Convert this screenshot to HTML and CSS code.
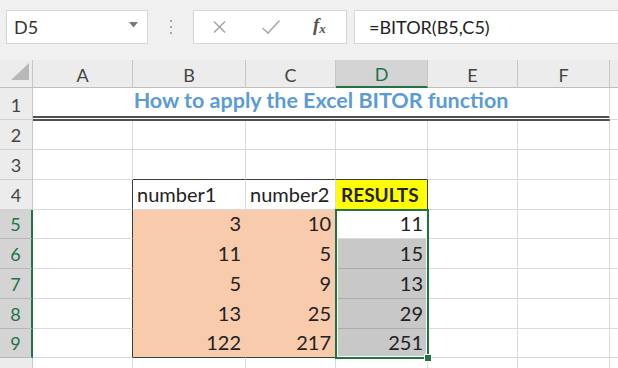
FILE: index.html
```html
<!DOCTYPE html>
<html>
<head>
<meta charset="utf-8">
<link rel="stylesheet" href="styles.css">
</head>
<body>
<div class="toolbar">
  <div class="namebox">
    <span class="nb-text">D5</span>
    <svg class="nb-arrow" width="9" height="6" viewBox="0 0 9 6"><path d="M0 0H9L4.5 5.5Z" fill="#7a7a7a"/></svg>
  </div>
  <div class="dots"><i></i><i></i><i></i></div>
  <div class="fxbox">
    <svg class="ic" width="20" height="14" viewBox="0 0 20 14"><path d="M4 1.5L15 12.5M15 1.5L4 12.5" stroke="#a0a0a0" stroke-width="1.4" fill="none"/></svg>
    <svg class="ic" width="20" height="16" viewBox="0 0 20 16"><path d="M1.5 9L7 14L18.5 1.5" stroke="#aaaaaa" stroke-width="1.6" fill="none"/></svg>
    <span class="fx"><i>f</i><sub>x</sub></span>
  </div>
  <div class="formula">=BITOR(B5,C5)</div>
</div>

<div class="sheet">
  <!-- header row -->
  <div class="corner"><svg width="19" height="18" viewBox="0 0 19 18"><path d="M18 0V17H0Z" fill="#b8b8b8"/></svg></div>
  <div class="ch">A</div>
  <div class="ch">B</div>
  <div class="ch">C</div>
  <div class="ch ch-sel">D</div>
  <div class="ch">E</div>
  <div class="ch">F</div>
  <div class="ch ch-last"></div>

  <!-- row 1 -->
  <div class="rh">1</div>
  <div class="c title">How to apply the Excel BITOR function</div>
  <div class="c"></div>

  <!-- row 2 -->
  <div class="rh">2</div>
  <div class="c"></div><div class="c"></div><div class="c"></div><div class="c"></div><div class="c"></div><div class="c"></div><div class="c"></div>

  <!-- row 3 -->
  <div class="rh">3</div>
  <div class="c"></div><div class="c tb-top"></div><div class="c tb-top"></div><div class="c tb-top"></div><div class="c"></div><div class="c"></div><div class="c"></div>

  <!-- row 4 -->
  <div class="rh">4</div>
  <div class="c tb-left"></div>
  <div class="c">number1</div>
  <div class="c">number2</div>
  <div class="c yellow">RESULTS</div>
  <div class="c"></div><div class="c"></div><div class="c"></div>

  <!-- row 5 -->
  <div class="rh rh-sel">5</div>
  <div class="c tb-left"></div>
  <div class="c num peach pb">3</div>
  <div class="c num peach">10</div>
  <div class="c num active">11
    <div class="selection"><span class="handle"></span></div>
  </div>
  <div class="c"></div><div class="c"></div><div class="c"></div>

  <!-- row 6 -->
  <div class="rh rh-sel">6</div>
  <div class="c tb-left"></div>
  <div class="c num peach pb">11</div>
  <div class="c num peach">5</div>
  <div class="c num shade">15</div>
  <div class="c"></div><div class="c"></div><div class="c"></div>

  <!-- row 7 -->
  <div class="rh rh-sel">7</div>
  <div class="c tb-left"></div>
  <div class="c num peach pb">5</div>
  <div class="c num peach">9</div>
  <div class="c num shade">13</div>
  <div class="c"></div><div class="c"></div><div class="c"></div>

  <!-- row 8 -->
  <div class="rh rh-sel">8</div>
  <div class="c tb-left"></div>
  <div class="c num peach pb">13</div>
  <div class="c num peach">25</div>
  <div class="c num shade">29</div>
  <div class="c"></div><div class="c"></div><div class="c"></div>

  <!-- row 9 -->
  <div class="rh rh-sel">9</div>
  <div class="c tb-left"></div>
  <div class="c num peach pb tb-bottom">122</div>
  <div class="c num peach tb-bottom">217</div>
  <div class="c num shade tb-bottom">251</div>
  <div class="c"></div><div class="c"></div><div class="c"></div>

  <!-- row 10 (only its top edge is in view) -->
  <div class="rh"></div>
  <div class="c"></div><div class="c"></div><div class="c"></div><div class="c"></div><div class="c"></div><div class="c"></div><div class="c"></div>
</div>
</body>
</html>
```

FILE: styles.css
```css
html, body {
  margin: 0;
  padding: 0;
  background: #ffffff;
  overflow: hidden;
}
body {
  width: 618px;
  height: 368px;
  font-family: Lato, "Liberation Sans", sans-serif;
  color: #222222;
}

/* ---------- toolbar ---------- */
.toolbar {
  height: 60px;
  box-sizing: border-box;
  background: #f0f0f0;
  display: flex;
  align-items: flex-start;
  padding-top: 10px;
}
.namebox {
  margin-left: 6px;
  width: 142px;
  height: 34px;
  box-sizing: border-box;
  background: #ffffff;
  border: 1px solid #d6d6d6;
  display: flex;
  align-items: center;
  justify-content: space-between;
  padding: 0 9px 0 7px;
}
.nb-text {
  font-size: 18px;
  color: #333333;
}
.nb-arrow {
  margin-top: -4px;
}
.dots {
  width: 45px;
  height: 34px;
  display: flex;
  flex-direction: column;
  align-items: center;
  justify-content: center;
  gap: 4px;
}
.dots i {
  display: block;
  width: 2px;
  height: 2px;
  background: #a8a8a8;
}
.fxbox {
  width: 154px;
  height: 34px;
  box-sizing: border-box;
  background: #ffffff;
  border: 1px solid #d6d6d6;
  display: flex;
  align-items: center;
  padding-left: 16px;
  gap: 31px;
}
.ic {
  display: block;
}
.fx {
  font-family: "Liberation Serif", serif;
  font-size: 19px;
  color: #555555;
  font-weight: bold;
  margin-top: -4px;
  margin-left: 1px;
}
.fx sub {
  font-style: italic;
  font-size: 13px;
  vertical-align: -2px;
}
.formula {
  flex: 1;
  margin-left: 7px;
  margin-right: -2px;
  height: 34px;
  box-sizing: border-box;
  background: #ffffff;
  border: 1px solid #d6d6d6;
  display: flex;
  align-items: center;
  padding-left: 14px;
  font-size: 18px;
  color: #222222;
}

/* ---------- sheet grid ---------- */
.sheet {
  display: grid;
  grid-template-columns: 33px 100px 113px 90px 92px 90px 92px 1fr;
  grid-template-rows: 28px 32px 30px 30px 30px 29px 30px 30px 30px 29px 30px;
  font-size: 20px;
}

.corner {
  background: #ececec;
  border-right: 1px solid #c6c6c6;
  border-bottom: 1px solid #bdbdbd;
  display: flex;
  align-items: flex-end;
  justify-content: flex-end;
  padding: 0 2px 6px 0;
}
.corner svg { display: block; }

.ch {
  background: #ececec;
  border-right: 1px solid #c6c6c6;
  border-bottom: 1px solid #bdbdbd;
  display: flex;
  align-items: center;
  justify-content: center;
  font-size: 18px;
  color: #444444;
  padding-top: 2px;
}
.ch-sel {
  background: #d4d4d4;
  color: #217346;
  border-bottom: 2px solid #217346;
}
.ch-last {
  border-right: none;
}

.rh {
  background: #ececec;
  border-right: 1px solid #c6c6c6;
  border-bottom: 1px solid #d0d0d0;
  display: flex;
  align-items: flex-end;
  justify-content: center;
  padding-bottom: 3px;
  font-size: 18px;
  color: #444444;
}
.rh-sel {
  background: #d4d4d4;
  color: #217346;
  border-right: 2px solid #217346;
  border-bottom-color: #b8b8b8;
}

.c {
  border-right: 1px solid #dadada;
  border-bottom: 1px solid #dadada;
  display: flex;
  align-items: flex-end;
  padding: 0 4px 3px 4px;
  white-space: nowrap;
  overflow: visible;
}
.num {
  justify-content: flex-end;
}

.title {
  grid-column: 2 / 8;
  justify-content: center;
  font-weight: bold;
  color: #5b9bd5;
  font-size: 21.5px;
  border-bottom: 5px double #505050;
  margin-bottom: -1px;
  padding-bottom: 3px;
  position: relative;
  z-index: 1;
}

.tb-top { border-bottom-color: #3c3c3c; }
.tb-left { border-right-color: #3c3c3c; }
.tb-bottom { border-bottom-color: #3c3c3c; }

.peach {
  background: #f8cbad;
  border-bottom-color: #f8cbad;
}
.pb { border-right-color: #f8cbad; }
.peach.tb-bottom { border-bottom-color: #3c3c3c; }

.yellow {
  background: #ffff00;
  font-weight: bold;
  font-size: 19px;
  padding-left: 5px;
  border-right-color: #3c3c3c;
  border-bottom-color: #3c3c3c;
}

.shade {
  background: #c8c8c8;
  border-bottom-color: #aaaaaa;
}

.active {
  position: relative;
}
.selection {
  position: absolute;
  left: -1px;
  top: -1px;
  width: 94px;
  height: 150px;
  box-sizing: border-box;
  border: 2px solid #217346;
  box-shadow: inset 0 0 0 1px rgba(255, 255, 255, 0.85);
  z-index: 2;
  pointer-events: none;
}
.handle {
  position: absolute;
  right: -5px;
  bottom: -5px;
  width: 6px;
  height: 6px;
  background: #217346;
  border: 1px solid #ffffff;
}
```
